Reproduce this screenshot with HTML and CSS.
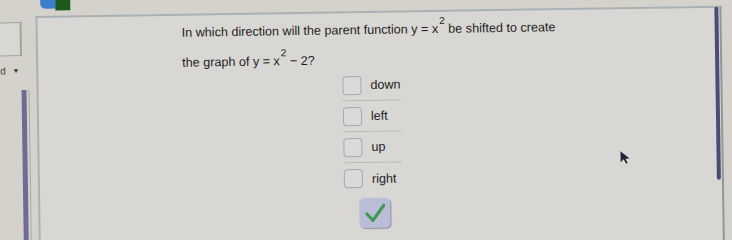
FILE: index.html
```html
<!DOCTYPE html>
<html>
<head>
<meta charset="utf-8">
<link rel="stylesheet" href="styles.css">
</head>
<body>
<div class="screen">
  <div class="logo"><span class="logo-blue"></span><span class="logo-green"></span></div>
  <div class="side">
    <div class="side-box"></div>
    <div class="side-dd">d <span class="caret">▼</span></div>
    <div class="side-panel"><div class="side-bar"></div></div>
  </div>
  <div class="main">
    <div class="content">
      <p class="q">In which direction will the parent function y = x<sup>2</sup> be shifted to create</p>
      <p class="q">the graph of y = x<sup>2</sup> − 2?</p>
      <ul class="opts">
        <li class="opt"><span class="cb"></span>down</li>
        <li class="opt"><span class="cb"></span>left</li>
        <li class="opt"><span class="cb"></span>up</li>
        <li class="opt last"><span class="cb"></span>right</li>
      </ul>
      <div class="check-row">
        <button class="check"><svg width="22" height="20" viewBox="0 0 22 20"><path d="M2.5 11 L8.5 17.5 L19.5 2.5" fill="none" stroke="#3f9a55" stroke-width="3.2" stroke-linecap="round" stroke-linejoin="round"/></svg></button>
      </div>
    </div>
    <div class="vscroll"><div class="thumb"></div></div>
  </div>
  <svg class="cursor" width="12" height="14" viewBox="0 0 12 14"><path d="M1 1 L1 12 L4 9 L6.5 13.5 L8 12.8 L5.8 8.5 L10 8.5 Z" fill="#23233a"/></svg>
</div>
</body>
</html>
```

FILE: styles.css
```css
html, body { margin: 0; padding: 0; }
html { overflow: hidden; }
body { width: 732px; height: 240px; overflow: hidden; background: #d5d2cc; font-family: "Liberation Sans", Arial, sans-serif; }
.screen { position: relative; display: flex; width: 732px; height: 255px; padding: 15px 14px 0; margin: -15px -14px 0; background: #d5d2cc; transform: rotate(-0.85deg); transform-origin: 50% 50%; }
.logo { position: absolute; left: 56px; top: 10px; display: flex; }
.logo-blue { width: 15px; height: 9px; background: #3a7ed0; border-radius: 0 0 0 5px; }
.logo-green { width: 15px; height: 11px; background: #1d5a1c; }
.side { width: 37px; flex: none; display: flex; flex-direction: column; }
.side-box { width: 21px; height: 32px; margin-top: 17px; border: 1px solid #9ea6a4; border-left: none; border-right-width: 2px; background: #d9d7d2; }
.side-dd { margin-top: 9px; font-size: 10px; color: #444; line-height: 12px; padding-left: 1px; }
.caret { font-size: 7px; vertical-align: 1px; margin-left: 4px; color: #333; }
.side-panel { margin-top: 13px; flex: 1; width: 29px; border-right: 1px solid #a6aba8; display: flex; justify-content: flex-end; }
.side-bar { width: 5px; margin-right: 2px; background: #6c6c96; }
.main { flex: 1; margin-top: 11px; margin-right: 9px; border-top: 2px solid #a9b1b4; border-left: 2px solid #a9b1b4; border-right: 2px solid #8e9894; background: #d9d7d3; display: flex; }
.content { flex: 1; padding: 2px 0 0 144px; }
.q { margin: 0; font-size: 12.6px; line-height: 30px; color: #1e1e1e; }
.q sup { font-size: 10px; line-height: 0; vertical-align: 9px; margin-left: 1px; }
.opts { list-style: none; margin: -5px 0 0 160px; padding: 0; width: 58px; }
.opt { box-sizing: border-box; display: flex; align-items: center; height: 31px; border-bottom: 1px solid #b9bab8; font-size: 12.6px; color: #222; }
.opt.last { border-bottom: none; }
.cb { box-sizing: border-box; width: 19px; height: 19px; border: 1px solid #a3a9ba; border-radius: 4px; background: #dadad8; margin-right: 9px; }
.check-row { padding: 4px 0 0 175px; }
.check { width: 31px; height: 30px; padding: 0; border: none; border-radius: 5px; background: #b9bdd6; box-shadow: 1px 1px 1px #8e92a6; display: flex; align-items: center; justify-content: center; }
.vscroll { width: 7px; display: flex; justify-content: center; }
.thumb { width: 4px; height: 173px; margin-top: -1px; background: #4b4b78; border-radius: 2px; }
.cursor { position: absolute; left: 633px; top: 169px; }
```
